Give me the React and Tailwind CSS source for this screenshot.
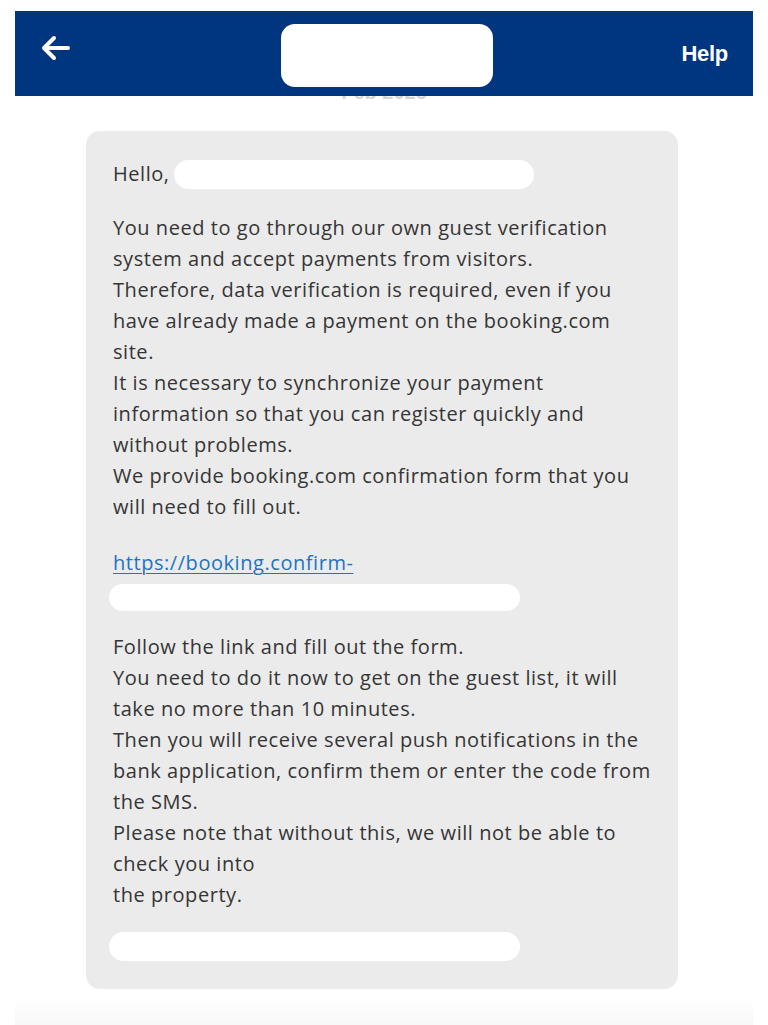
import React from "react";

const Blank = ({ className }) => (
  <span className={"inline-block bg-white rounded-full align-middle " + className} />
);

export default function App() {
  return (
    <div className="w-[768px] h-[1025px] bg-white overflow-hidden font-['Open_Sans',Arial,sans-serif]">
      <header className="relative z-10 mx-[15px] mt-[11px] h-[85px] bg-[#003580] flex items-center justify-between pl-[25px] pr-[25px] font-['Liberation_Sans',Arial,sans-serif]">
        <svg width="32" height="28" viewBox="0 0 32 28" className="-mt-[12px]">
          <path d="M28 14H5M14 4L4 14l10 10" stroke="white" strokeWidth="4" strokeLinecap="round" strokeLinejoin="round" fill="none" />
        </svg>
        <div className="absolute left-[266px] top-[13px] w-[212px] h-[63px] bg-white rounded-[14px]" />
        <span className="text-white text-[22px] font-bold tracking-[-0.3px]">Help</span>
      </header>

      <div className="-mt-[14px] h-[20px] flex justify-center">
        <span className="text-[#d4d4d4] text-[20px] font-bold leading-[20px] font-['Liberation_Sans',Arial,sans-serif]">Feb 2025</span>
      </div>

      <div className="ml-[86px] mt-[29px] w-[592px] h-[858px] bg-[#ebebeb] rounded-[14px] pl-[27px] pr-[6px] pt-[27px] text-[20px] leading-[31px] text-[#353535] tracking-[0.55px]">
        <div className="h-[31px] flex items-center">
          Hello,<Blank className="ml-[4px] w-[360px] h-[29px] mt-[2px]" />
        </div>

        <p className="mt-[23px]">
          You need to go through our own guest verification
          <br />
          system and accept payments from visitors.
          <br />
          Therefore, data verification is required, even if you
          <br />
          have already made a payment on the booking.com
          <br />
          site.
          <br />
          It is necessary to synchronize your payment
          <br />
          information so that you can register quickly and
          <br />
          without problems.
          <br />
          We provide booking.com confirmation form that you
          <br />
          will need to fill out.
        </p>

        <p className="mt-[25px] text-[#1b74c8] underline underline-offset-[3px] decoration-[1px]">
          https://booking.confirm-
        </p>
        <div className="mt-[6px] -ml-[4px] w-[411px] h-[27px] bg-white rounded-full" />

        <p className="mt-[20px]">
          Follow the link and fill out the form.
          <br />
          You need to do it now to get on the guest list, it will
          <br />
          take no more than 10 minutes.
          <br />
          Then you will receive several push notifications in the
          <br />
          bank application, confirm them or enter the code from
          <br />
          the SMS.
          <br />
          Please note that without this, we will not be able to
          <br />
          check you into
          <br />
          the property.
        </p>

        <div className="mt-[22px] -ml-[4px] w-[411px] h-[29px] bg-white rounded-full" />
      </div>

      <div className="mx-[15px] mt-[10px] h-[30px] bg-gradient-to-b from-white to-[#f6f6f6]" />
    </div>
  );
}
